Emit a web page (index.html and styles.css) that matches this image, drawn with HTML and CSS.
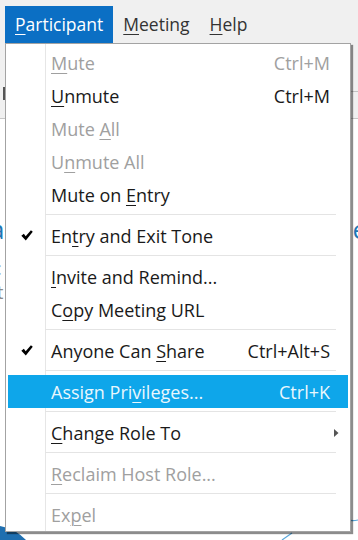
FILE: index.html
```html
<!DOCTYPE html>
<html>
<head>
<meta charset="utf-8">
<link rel="stylesheet" href="styles.css">
</head>
<body>
<div class="page">
  <div class="topbar">
    <nav class="menubar">
      <span class="mb-item active"><u>P</u>articipant</span>
      <span class="mb-item"><u>M</u>eeting</span>
      <span class="mb-item"><u>H</u>elp</span>
    </nav>
    <div class="toolbar">
      <span class="tb-mark"></span>
      <span class="tb-line"></span>
    </div>
  </div>
  <div class="content">
    <div class="heading-row"><span class="frag-left">a</span><span class="frag-right">e</span></div>
    <div class="gray-line first">:</div>
    <div class="gray-line">t</div>
    <svg class="deco" width="358" height="22" viewBox="0 0 358 22">
      <path d="M0 8 Q14 10 26 22 L0 22 Z" fill="#1f6fb0"/>
      <path d="M282 22 L292 15" stroke="#5aa7da" stroke-width="1.2" fill="none"/>
      <path d="M343 0 Q350 4 358 2" stroke="#5aa7da" stroke-width="1.2" fill="none"/>
    </svg>
  </div>

  <div class="menu">
    <div class="row disabled"><span class="lbl"><u>M</u>ute</span><span class="sc">Ctrl+M</span></div>
    <div class="row"><span class="lbl"><u>U</u>nmute</span><span class="sc">Ctrl+M</span></div>
    <div class="row disabled"><span class="lbl">Mute <u>A</u>ll</span></div>
    <div class="row disabled"><span class="lbl">U<u>n</u>mute All</span></div>
    <div class="row"><span class="lbl">Mute on <u>E</u>ntry</span></div>
    <div class="sep"></div>
    <div class="row"><span class="chk"><svg width="12" height="11" viewBox="0 0 11 10"><path d="M0.3 5.3 L2.6 3.4 L4.3 5.6 L9.1 0.2 L10.8 1.6 L4.4 9.6 Z" fill="#000"/></svg></span><span class="lbl">En<u>t</u>ry and Exit Tone</span></div>
    <div class="sep"></div>
    <div class="row"><span class="lbl"><u>I</u>nvite and Remind...</span></div>
    <div class="row"><span class="lbl">C<u>o</u>py Meeting URL</span></div>
    <div class="sep"></div>
    <div class="row"><span class="chk"><svg width="12" height="11" viewBox="0 0 11 10"><path d="M0.3 5.3 L2.6 3.4 L4.3 5.6 L9.1 0.2 L10.8 1.6 L4.4 9.6 Z" fill="#000"/></svg></span><span class="lbl">Anyone Can <u>S</u>hare</span><span class="sc">Ctrl+Alt+S</span></div>
    <div class="sep"></div>
    <div class="row selected"><span class="lbl">Assign Pri<u>v</u>ileges...</span><span class="sc">Ctrl+K</span></div>
    <div class="sep"></div>
    <div class="row"><span class="lbl"><u>C</u>hange Role To</span><span class="arrow"><svg width="5" height="8" viewBox="0 0 5 8"><path d="M0 0 L4.5 4 L0 8 Z" fill="#555"/></svg></span></div>
    <div class="sep"></div>
    <div class="row disabled"><span class="lbl"><u>R</u>eclaim Host Role...</span></div>
    <div class="sep"></div>
    <div class="row disabled"><span class="lbl">Ex<u>p</u>el</span></div>
  </div>
</div>
</body>
</html>
```

FILE: styles.css
```css
* { box-sizing: border-box; }
html, body { margin: 0; padding: 0; background: #fff; }
body {
  font-family: "Open Sans", "Noto Sans", sans-serif;
  font-size: 18px;
  color: #1a1a1a;
}
u { text-decoration-thickness: 1px; text-underline-offset: 3px; }

.page {
  position: relative;
  width: 358px;
  height: 540px;
  overflow: hidden;
  display: flex;
  flex-direction: column;
}

.topbar { background: #f0f0f0; border-bottom: 1px solid #c6c6c6; }
.menubar {
  display: flex;
  padding: 6px 0 0 5px;
  height: 43px;
  font-size: 17.5px;
}
.mb-item {
  height: 37px;
  line-height: 36px;
  padding: 0 10px;
  color: #333;
  position: relative;
  z-index: 3;
}
.mb-item.active { background: #0b6fc4; color: #fff; }

.toolbar {
  height: 75px;
  position: relative;
  display: flex;
}
.tb-mark {
  width: 2px; height: 13px; background: #555;
  margin: 44px 0 0 3px;
}
.tb-line {
  flex: 1;
  height: 1px;
  background: #c2c2c2;
  margin-top: 48px;
  margin-left: 300px;
}

.content {
  flex: 1;
  display: flex;
  flex-direction: column;
}
.heading-row {
  display: flex;
  justify-content: space-between;
  margin: 95px -9px 0 -10px;
  font-size: 26px;
  line-height: 30px;
  color: #1e76b4;
}
.gray-line {
  margin-left: -3px;
  color: #8a8a8a;
  font-size: 18px;
  line-height: 24px;
}
.gray-line.first { margin-top: 12px; }
.deco { margin-top: auto; display: block; }

/* dropdown menu overlays the page */
.menu {
  position: absolute;
  left: 5px;
  top: 43px;
  width: 346px;
  background: #fff linear-gradient(to right, transparent 39px, #e6e6e6 39px, #e6e6e6 40px, transparent 40px);
  border: 1px solid #a3a3a3;
  box-shadow: 2px 2px 1px rgba(0,0,0,0.45);
  padding: 2px 0 0 0;
  z-index: 2;
}
.row {
  height: 33px;
  margin: 0 2px;
  display: grid;
  grid-template-columns: 43px 1fr auto 18px;
  align-items: center;
  white-space: nowrap;
  color: #1a1a1a;
}
.row .chk { grid-column: 1; padding-left: 13px; display: flex; align-items: center; }
.row .lbl { grid-column: 2; }
.row .sc { grid-column: 3; }
.row .arrow { grid-column: 4; display: flex; align-items: center; padding-left: 4px; }
.row.disabled { color: #a0a0a0; }
.row.selected { background: #0ea6ea; color: #e9f7fd; }
.sep {
  height: 8px;
  margin: 0 14px 0 39px;
  background: linear-gradient(#e4e4e4, #e4e4e4) no-repeat 0 3px / 100% 1px;
}
```
